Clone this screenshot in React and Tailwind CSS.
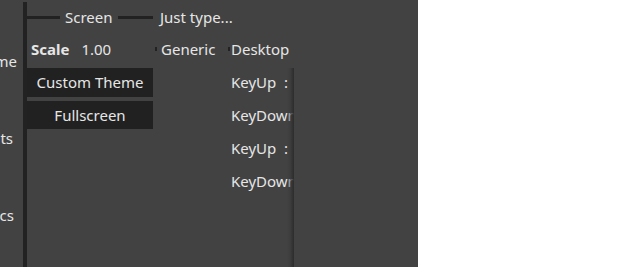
export default function App() {
  const font = { fontFamily: '"Noto Sans", "Open Sans", sans-serif' };
  return (
    <div className="flex w-[624px] h-[267px] bg-white overflow-hidden" style={font}>
      <div className="flex w-[418px] h-full bg-[#424242] text-[15px] text-[#e6e6e6] overflow-hidden">
        {/* clipped side labels */}
        <div className="w-[23px] flex flex-col items-end overflow-hidden whitespace-nowrap">
          <div className="h-[50px]" />
          <div className="h-[22px] leading-[22px] pr-[6px]">Theme</div>
          <div className="h-[55px]" />
          <div className="h-[22px] leading-[22px] pr-[10px]">Fonts</div>
          <div className="h-[55px]" />
          <div className="h-[22px] leading-[22px] pr-[9px]">Graphics</div>
        </div>
        <div className="w-[4px] h-full mt-[2px] bg-[#222222]" />

        {/* Screen column */}
        <div className="w-[126px] flex flex-col pt-[6px]">
          <div className="flex items-center h-[22px]">
            <div className="w-[33px] h-[3px] bg-[#222222]" />
            <span className="px-[5px] leading-[22px]">Screen</span>
            <div className="flex-1 h-[3px] bg-[#222222]" />
          </div>
          <div className="flex items-center h-[22px] mt-[10px] pl-[4px]">
            <span className="font-bold">Scale</span>
            <span className="ml-[12px]">1.00</span>
          </div>
          <div className="mt-[8px] h-[29px] bg-[#212121] flex items-center justify-center">Custom Theme</div>
          <div className="mt-[4px] h-[28px] bg-[#212121] flex items-center justify-center">Fullscreen</div>
        </div>

        {/* middle column */}
        <div className="w-[78px] flex flex-col pt-[6px] whitespace-nowrap">
          <div className="flex items-center h-[22px]">
            <div className="w-[1px] h-[3px] ml-[2px] bg-[#222222]" />
            <span className="ml-[5px]">Just type...</span>
          </div>
          <div className="flex items-center h-[22px] mt-[10px]">
            <div className="w-[2px] h-[4px] ml-[2px] bg-[#222222]" />
            <span className="ml-[4px]">Generic</span>
            <div className="w-[2px] h-[4px] ml-auto mr-[1px] bg-[#222222]" />
          </div>
        </div>

        {/* platform column */}
        <div className="w-[63px] flex flex-col pt-[6px] overflow-hidden whitespace-nowrap">
          <div className="h-[22px]" />
          <div className="flex items-center h-[22px] mt-[10px]">Desktop</div>
          <div className="flex flex-col">
            <div className="h-[22px] mt-[11px] flex items-center">KeyUp&nbsp;&nbsp;:</div>
            <div className="h-[22px] mt-[11px] flex items-center">KeyDown</div>
            <div className="h-[22px] mt-[11px] flex items-center">KeyUp&nbsp;&nbsp;:</div>
            <div className="h-[22px] mt-[11px] flex items-center">KeyDown</div>
          </div>
        </div>
        <div className="w-[7px] -ml-[7px] flex flex-col relative">
          <div className="h-[68px]" />
          <div className="flex-1 bg-gradient-to-r from-[#42424200] via-[#38383899] to-[#2c2c2c]" />
        </div>
        <div className="flex-1" />
      </div>
    </div>
  );
}
